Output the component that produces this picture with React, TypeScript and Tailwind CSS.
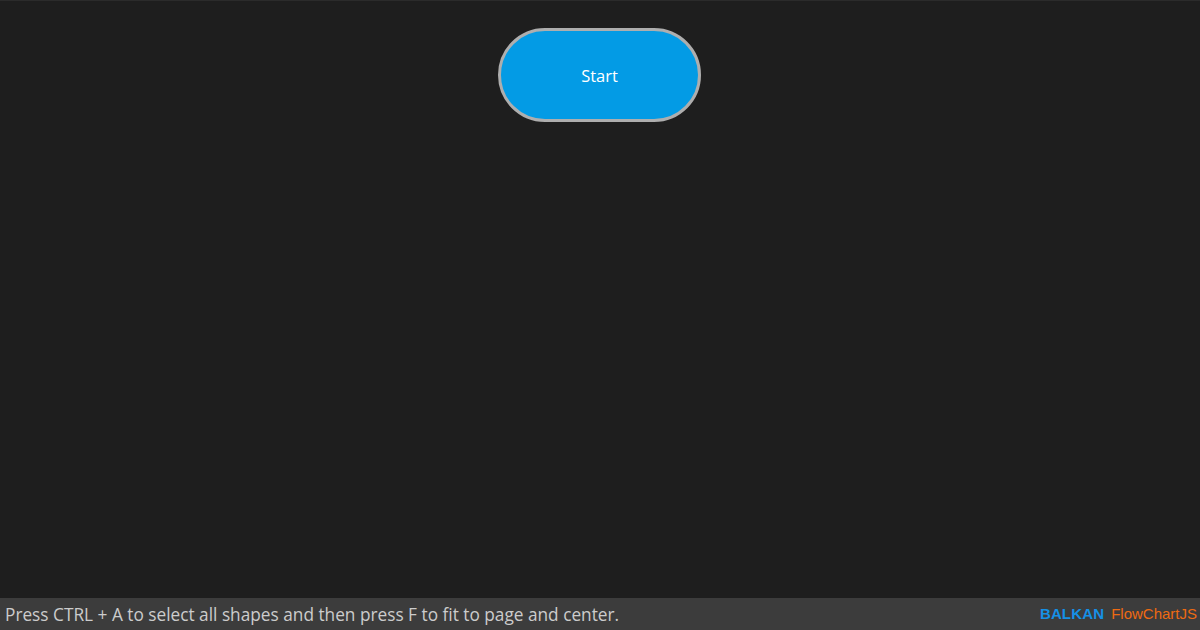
export default function App() {
  return (
    <div className="flex h-[630px] w-[1200px] flex-col overflow-hidden bg-[#1e1e1e] font-['Open_Sans','Noto_Sans',sans-serif]">
      {/* canvas */}
      <div className="relative flex-1 border-t border-[#2b2b2b]">
        <div className="absolute left-[498px] top-[27px] flex h-[94px] w-[203px] items-center justify-center rounded-[47px] border-[3px] border-[#aeaeae] bg-[#039be5] pt-[2px] text-[16.5px] text-white">
          Start
        </div>
      </div>

      {/* status bar */}
      <div className="flex h-[32px] items-center justify-between bg-[#3c3c3c] pl-[5px] pr-[3px]">
        <span className="pt-[2px] text-[17.25px] text-[#cccccc]">
          Press CTRL + A to select all shapes and then press F to fit to page and center.
        </span>
        <span className="flex items-center gap-[7px] font-['Liberation_Sans',sans-serif] text-[15px]">
          <span className="font-bold tracking-[0.15px] text-[#1590e6]">BALKAN</span>
          <span className="text-[#ee6a12]">FlowChartJS</span>
        </span>
      </div>
    </div>
  );
}
